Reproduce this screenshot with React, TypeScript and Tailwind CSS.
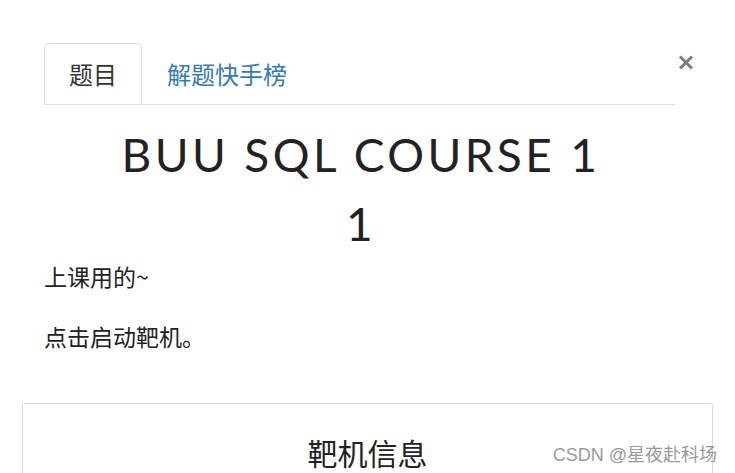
import React from "react";

const cjk = '"Noto Sans CJK SC", "Noto Sans", sans-serif';

export default function App() {
  return (
    <div
      className="relative w-[735px] h-[473px] overflow-hidden bg-white text-[#222]"
      style={{ fontFamily: cjk }}
    >
      <div className="relative pt-[43px] pl-[44px] pr-[60px]">
        {/* tabs */}
        <div className="flex border-b border-[#ddd]">
          <div className="-mb-px h-[61px] flex items-center px-[24px] border border-[#ddd] border-b-white rounded-t-[5px] bg-white text-[24px] text-[#333]">
            题目
          </div>
          <div className="h-[61px] flex items-center px-[25px] text-[24px] text-[#337ab7]">
            解题快手榜
          </div>
        </div>

        {/* close */}
        <button className="absolute right-[41px] top-[55px] w-[16px] h-[15px] flex items-center justify-center">
          <svg width="16" height="15" viewBox="0 0 16 15">
            <path
              d="M2 1.5 L14 13.5 M14 1.5 L2 13.5"
              stroke="#7a7a7a"
              strokeWidth="3"
              strokeLinecap="butt"
            />
          </svg>
        </button>

        {/* challenge title */}
        <h1
          className="mt-[15px] pl-[3px] text-center text-[46px] leading-[69px] font-normal tracking-[3.4px] text-[#222]"
          style={{ fontFamily: '"Lato", "Open Sans", sans-serif' }}
        >
          BUU SQL COURSE 1
          <br />1
        </h1>

        {/* description */}
        <div className="mt-[2px] text-[23px] leading-[33px] text-[#222]">
          <p>上课用的~</p>
          <p className="mt-[27px]">点击启动靶机。</p>
        </div>
      </div>

      {/* instance panel */}
      <div className="mx-[22px] mt-[50px] h-[200px] border border-[#ddd] rounded-[2px]">
        <div className="pt-[26px] text-center text-[30px] leading-[45px] text-[#222]">
          靶机信息
        </div>
      </div>

      <div
        className="absolute right-[18px] top-[443px] text-[18px] leading-[24px] text-[#9a9a9a]"
        style={{ fontFamily: '"Liberation Sans Narrow", "Liberation Sans", "Noto Sans CJK SC", sans-serif' }}
      >
        CSDN @星夜赴科场
      </div>
    </div>
  );
}
